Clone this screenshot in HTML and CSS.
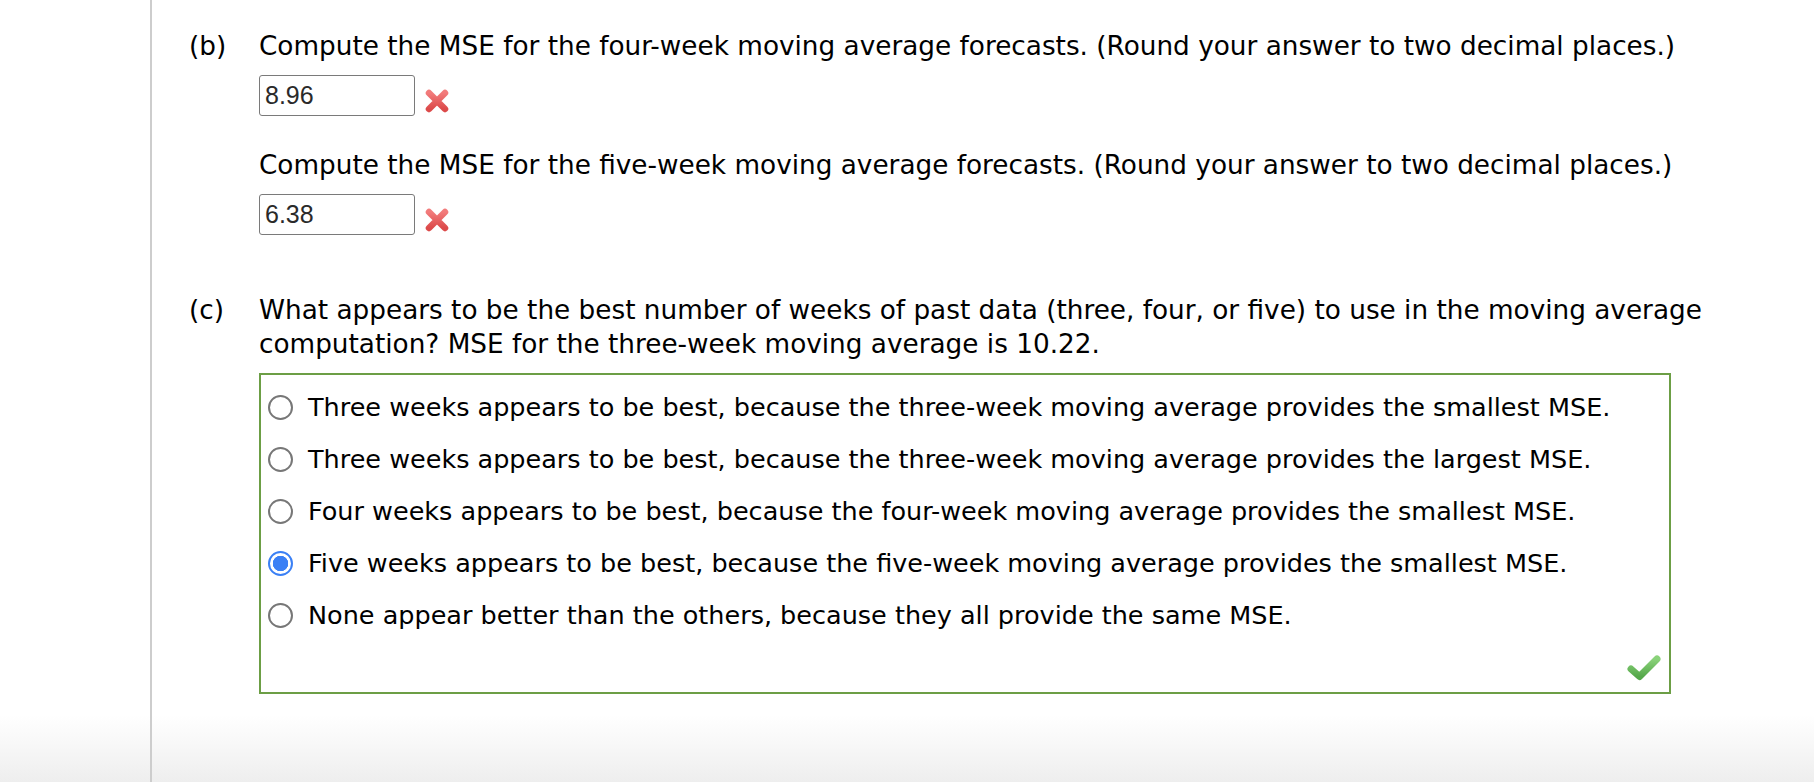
FILE: index.html
```html
<!DOCTYPE html>
<html>
<head>
<meta charset="utf-8">
<link rel="stylesheet" href="styles.css">
</head>
<body>
<div class="page">
  <div class="gutter"></div>
  <div class="rule"></div>
  <main class="content">
    <section class="part part-b">
      <div class="label">(b)</div>
      <div class="body">
        <p class="q">Compute the MSE for the four-week moving average forecasts. (Round your answer to two decimal places.)</p>
        <div class="answer">
          <input class="field" type="text" value="8.96">
          <svg class="mark-x" viewBox="0 0 28 28" width="28" height="28"><defs><linearGradient id="rx" x1="0" y1="0" x2="0" y2="1"><stop offset="0" stop-color="#f27b7b"/><stop offset="1" stop-color="#dc4a4a"/></linearGradient></defs><path d="M6 6 L22 22 M22 6 L6 22" stroke="url(#rx)" stroke-width="6.5" stroke-linecap="round" fill="none"/></svg>
        </div>
        <p class="q">Compute the MSE for the five-week moving average forecasts. (Round your answer to two decimal places.)</p>
        <div class="answer">
          <input class="field" type="text" value="6.38">
          <svg class="mark-x" viewBox="0 0 28 28" width="28" height="28"><path d="M6 6 L22 22 M22 6 L6 22" stroke="url(#rx)" stroke-width="6.5" stroke-linecap="round" fill="none"/></svg>
        </div>
      </div>
    </section>
    <section class="part part-c">
      <div class="label">(c)</div>
      <div class="body">
        <p class="q">What appears to be the best number of weeks of past data (three, four, or five) to use in the moving average computation? MSE for the three-week moving average is 10.22.</p>
        <div class="choices">
          <label class="opt"><span class="radio"></span>Three weeks appears to be best, because the three-week moving average provides the smallest MSE.</label>
          <label class="opt"><span class="radio"></span>Three weeks appears to be best, because the three-week moving average provides the largest MSE.</label>
          <label class="opt"><span class="radio"></span>Four weeks appears to be best, because the four-week moving average provides the smallest MSE.</label>
          <label class="opt"><span class="radio on"></span>Five weeks appears to be best, because the five-week moving average provides the smallest MSE.</label>
          <label class="opt"><span class="radio"></span>None appear better than the others, because they all provide the same MSE.</label>
          <svg class="mark-ok" viewBox="0 0 34 27" width="34" height="27"><defs><linearGradient id="gk" x1="0" y1="0" x2="0" y2="1"><stop offset="0" stop-color="#8ad27a"/><stop offset="1" stop-color="#55a84a"/></linearGradient></defs><path d="M4 15 L12.5 22.5 L30 5" stroke="url(#gk)" stroke-width="7" stroke-linecap="round" stroke-linejoin="round" fill="none"/></svg>
        </div>
      </div>
    </section>
  </main>
</div>
</body>
</html>
```
FILE: styles.css
```css
html, body {
  margin: 0;
  padding: 0;
}
body {
  width: 1814px;
  height: 782px;
  overflow: hidden;
  background: linear-gradient(to bottom, #ffffff 0px, #ffffff 715px, #eeeeee 782px);
  font-family: "DejaVu Sans", Verdana, sans-serif;
  color: #000;
}
.page {
  display: flex;
  height: 782px;
}
.gutter {
  width: 150px;
  flex: none;
}
.rule {
  width: 2px;
  flex: none;
  background: #cdcdcd;
}
.content {
  flex: 1;
  padding-left: 37px;
  padding-top: 29px;
}
.part {
  display: flex;
}
.label {
  width: 70px;
  flex: none;
  font-size: 26.3px;
  line-height: 34px;
}
.body {
  flex: 1;
}
.q {
  margin: 0;
  font-size: 26.3px;
  line-height: 34px;
}
.answer {
  display: flex;
  align-items: center;
  gap: 8px;
  margin: 12px 0 32px;
}
.field {
  width: 156px;
  height: 41px;
  box-sizing: border-box;
  border: 1.5px solid #7a7a7a;
  border-radius: 3px;
  padding: 0 5px;
  font-family: "Liberation Sans", Arial, sans-serif;
  font-size: 25px;
  color: #2a2a2a;
  margin: 0;
}
.mark-x {
  margin-top: 10px;
}
.part-c {
  margin-top: 26px;
}
.choices {
  position: relative;
  width: 1412px;
  height: 321px;
  box-sizing: border-box;
  border: 2px solid #6c9e45;
  margin-top: 12px;
  padding-top: 6px;
}
.opt {
  display: flex;
  align-items: center;
  height: 52px;
  font-size: 25.5px;
}
.radio {
  width: 25px;
  height: 25px;
  box-sizing: border-box;
  border: 2px solid #777777;
  border-radius: 50%;
  margin-left: 7px;
  margin-right: 15px;
  flex: none;
  background: #fff;
}
.radio.on {
  border: 2.5px solid #3b80f5;
  background: radial-gradient(circle, #3b80f5 0 7.5px, #fff 8px);
}
.mark-ok {
  position: absolute;
  right: 8px;
  bottom: 11px;
}
```
